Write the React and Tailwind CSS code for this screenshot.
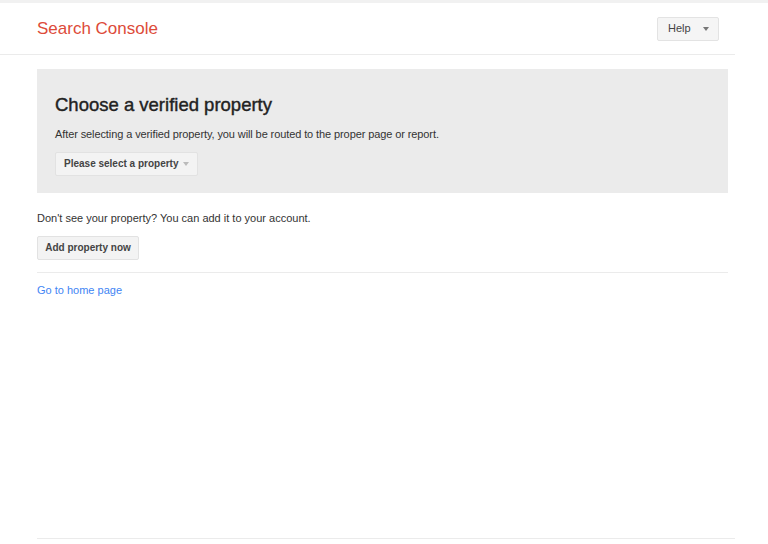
import React from 'react';

const App = () => {
    return (
        <div className="min-h-[544px] bg-white font-['Liberation_Sans',Arial,sans-serif] text-[#222] flex flex-col">
            <div className="h-[3px] bg-[#f1f1f1]" />
            <div className="w-[735px] h-[52px] border-b border-[#ebebeb] flex items-center justify-between pl-[37px] pr-[16px]">
                <span className="text-[17px] text-[#dd4b39]">Search Console</span>
                <button className="w-[62px] h-[24px] bg-[#f5f5f5] border border-[#e3e3e3] rounded-[2px] text-[11px] text-[#444] flex items-center justify-between pl-[10px] pr-[9px]">
                    Help
                    <span className="w-0 h-0 border-l-[3px] border-r-[3px] border-t-[4px] border-l-transparent border-r-transparent border-t-[#777]" />
                </button>
            </div>
            <div className="pl-[37px] pr-[40px] pt-[14px] flex flex-col flex-grow">
                <div className="bg-[#ebebeb] h-[124px] px-[18px] pt-[24px]">
                    <h1 className="text-[18.5px] leading-[24px] font-normal text-[#222] [-webkit-text-stroke:0.4px_#222]">Choose a verified property</h1>
                    <p className="text-[11px] mt-[9px] text-[#333] tracking-[-0.1px]">After selecting a verified property, you will be routed to the proper page or report.</p>
                    <button className="mt-[9px] h-[24px] bg-[#f3f3f3] border border-[#e2e2e2] rounded-[2px] text-[10px] font-bold text-[#444] whitespace-nowrap flex items-center pl-[8px] pr-[8px] gap-[4px]">
                        Please select a property
                        <span className="w-0 h-0 border-l-[3px] border-r-[3px] border-t-[4px] border-l-transparent border-r-transparent border-t-[#bbb]" />
                    </button>
                </div>
                <p className="text-[11px] mt-[17px] text-[#333]">Don't see your property? You can add it to your account.</p>
                <button className="mt-[9px] h-[24px] w-[102px] bg-[#f3f3f3] border border-[#e2e2e2] rounded-[2px] text-[10px] font-bold text-[#444] whitespace-nowrap">
                    Add property now
                </button>
                <div className="mt-[12px] border-t border-[#ebebeb]" />
                <a href="#" className="mt-[9px] text-[11px] text-[#4285f4] self-start">Go to home page</a>
                <div className="flex-grow" />
                <div className="mr-[-7px] mb-[5px] border-t border-[#ebebeb]" />
            </div>
        </div>
    );
};

export default App;
